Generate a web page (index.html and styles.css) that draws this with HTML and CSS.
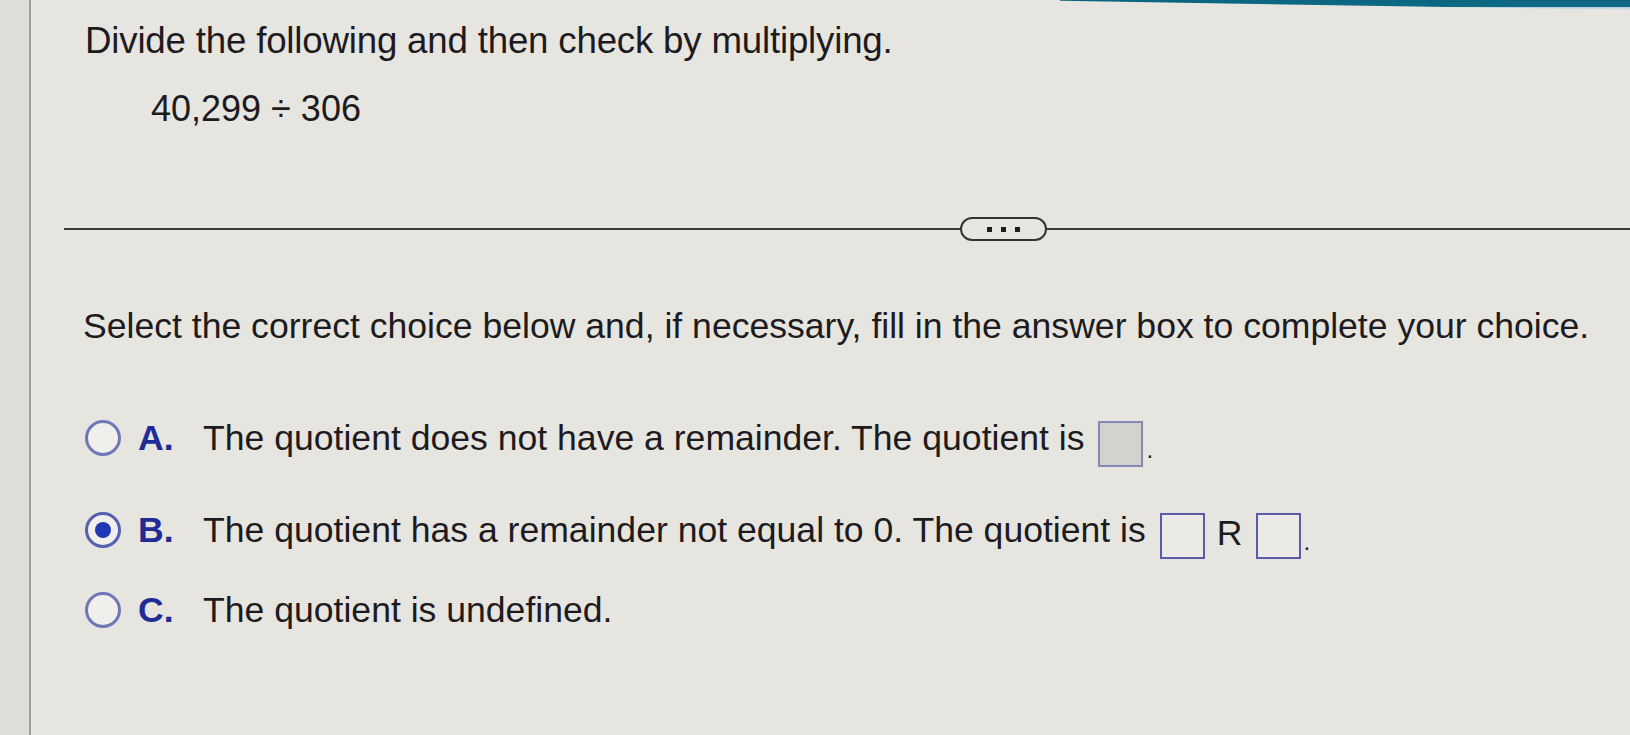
FILE: index.html
```html
<!DOCTYPE html>
<html>
<head>
<meta charset="utf-8">
<link rel="stylesheet" href="styles.css">
</head>
<body>
<div class="page">
  <div class="side"></div>
  <div class="main">
    <div class="topbar"><div class="teal"></div></div>
    <div class="content">
      <h1 class="title">Divide the following and then check by multiplying.</h1>
      <div class="expr">40,299 ÷ 306</div>
      <div class="divider">
        <div class="line line-left"></div>
        <div class="pill"><span></span><span></span><span></span></div>
        <div class="line line-right"></div>
      </div>
      <p class="prompt">Select the correct choice below and, if necessary, fill in the answer box to complete your choice.</p>
      <div class="choices">
        <div class="choice choice-a">
          <span class="radio"></span>
          <span class="letter">A.</span>
          <span class="text">The quotient does not have a remainder. The quotient is</span>
          <span class="box box-gray"></span><span class="dot">.</span>
        </div>
        <div class="choice choice-b">
          <span class="radio radio-on"><span class="inner"></span></span>
          <span class="letter">B.</span>
          <span class="text">The quotient has a remainder not equal to 0. The quotient is</span>
          <span class="box"></span><span class="r">R</span><span class="box box-second"></span><span class="dot">.</span>
        </div>
        <div class="choice choice-c">
          <span class="radio"></span>
          <span class="letter">C.</span>
          <span class="text">The quotient is undefined.</span>
        </div>
      </div>
    </div>
  </div>
</div>
</body>
</html>
```
FILE: styles.css
```css
html, body {
  margin: 0;
  padding: 0;
  height: 100%;
}
body {
  background: #e7e5e0;
  font-family: "Liberation Sans", Arial, sans-serif;
  color: #1d1b20;
  overflow: hidden;
}
.page {
  display: flex;
  height: 735px;
}
.side {
  width: 29px;
  flex: none;
  background: #e0ded9;
  border-right: 2px solid #a09e9b;
}
.main {
  flex: 1;
  display: flex;
  flex-direction: column;
  min-width: 0;
}
.topbar {
  height: 10px;
  display: flex;
  justify-content: flex-end;
}
.teal {
  width: 570px;
  height: 10px;
  background: linear-gradient(to bottom, #0b6580 0, #0e6c86 75%, #b9d3dc 75%, #dfe6e6 100%);
  clip-path: polygon(0 0, 100% 0, 100% 100%, 0 8%);
}
.content {
  padding-left: 54px;
}
.title {
  margin: 9px 0 0 0;
  font-size: 36.7px;
  font-weight: normal;
  line-height: 44px;
  letter-spacing: -0.2px;
  white-space: nowrap;
}
.expr {
  margin: 25px 0 0 66px;
  font-size: 36px;
  line-height: 42px;
}
.divider {
  display: flex;
  align-items: center;
  margin: 87px 0 0 -21px;
}
.line {
  height: 2px;
  background: #3a3a3e;
}
.line-left {
  width: 896px;
  flex: none;
}
.line-right {
  flex: 1;
}
.pill {
  width: 87px;
  height: 24px;
  border: 2.5px solid #333338;
  border-radius: 13px;
  box-sizing: border-box;
  display: flex;
  justify-content: center;
  align-items: center;
  gap: 9px;
  flex: none;
}
.pill span {
  width: 5px;
  height: 5px;
  background: #1d1b20;
}
.prompt {
  margin: 63px 0 0 -2px;
  font-size: 35.6px;
  line-height: 44px;
  white-space: nowrap;
}
.choices {
  margin-top: 64px;
  display: flex;
  flex-direction: column;
}
.choice {
  display: flex;
  align-items: center;
  height: 52px;
  font-size: 35.6px;
  white-space: nowrap;
}
.choice-b {
  margin-top: 40px;
}
.choice-c {
  margin-top: 28px;
}
.radio {
  width: 36px;
  height: 36px;
  border: 3px solid #6f77b7;
  border-radius: 50%;
  box-sizing: border-box;
  flex: none;
  display: flex;
  align-items: center;
  justify-content: center;
  background: #f0efec;
}
.radio-on {
  border-color: #5660b0;
  border-width: 3.5px;
}
.inner {
  width: 16px;
  height: 16px;
  border-radius: 50%;
  background: #1e38b6;
}
.letter {
  margin-left: 17px;
  width: 65px;
  flex: none;
  font-weight: bold;
  color: #1f2c96;
}
.text {
  white-space: nowrap;
}
.box {
  width: 45px;
  height: 46px;
  margin-left: 14px;
  border: 2px solid #5a5caa;
  box-sizing: border-box;
  background: #eceae6;
  flex: none;
  position: relative;
  top: 6px;
}
.box-gray {
  background: #d3d2ce;
  border-color: #8389b6;
  margin-left: 14px;
}
.box-second {
  margin-left: 13px;
}
.r {
  margin-left: 12px;
  position: relative;
  top: 3px;
}
.dot {
  margin-left: 3px;
  position: relative;
  top: 12px;
  font-size: 24px;
}
```
